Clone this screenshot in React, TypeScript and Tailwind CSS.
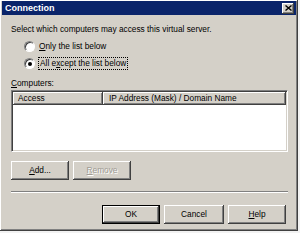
import React from "react";

// Classic Win2k-style "Connection" dialog
const FONT = { fontFamily: '"Liberation Sans", Arial, sans-serif' };

const raised =
  "shadow-[inset_-1px_-1px_#404040,inset_1px_1px_#ffffff,inset_-2px_-2px_#808080,inset_2px_2px_#d4d0c8]";

function Radio({ checked }: { checked?: boolean }) {
  return (
    <span className="relative flex h-[11px] w-[11px] shrink-0 items-center justify-center rounded-full border border-t-[#808080] border-l-[#808080] border-r-white border-b-white bg-white shadow-[inset_1px_1px_#404040]">
      {checked && <span className="h-[4px] w-[4px] rounded-full bg-black" />}
    </span>
  );
}

function Button({
  children,
  width,
  isDefault,
  disabled,
}: {
  children: React.ReactNode;
  width: string;
  isDefault?: boolean;
  disabled?: boolean;
}) {
  return (
    <div
      className={`flex h-[19px] items-center justify-center bg-[#d4d0c8] text-[8.3px] ${width} ${
        isDefault
          ? "border border-black shadow-[inset_-1px_-1px_#404040,inset_1px_1px_#ffffff,inset_-2px_-2px_#808080]"
          : raised
      } ${disabled ? "text-[#a09c94] [text-shadow:1px_1px_#ffffff]" : "text-black"}`}
    >
      {children}
    </div>
  );
}

export default function App() {
  return (
    <div className="h-[233px] w-[300px] bg-[#f2f2f2]" style={FONT}>
      <div className={`flex h-[231px] w-[298px] flex-col bg-[#d4d0c8] px-[2px] pt-[1px] ${raised}`}>
        {/* title bar */}
        <div className="flex h-[14px] items-center justify-between bg-[#0a246a] pl-[3px] pr-[2px]">
          <span className="text-[9px] font-bold leading-none text-white">Connection</span>
          <div className={`flex h-[11px] w-[12px] items-center justify-center bg-[#d4d0c8] ${raised}`}>
            <svg width="7" height="6" viewBox="0 0 7 6">
              <path d="M0.5 0.5 L6.5 5.5 M6.5 0.5 L0.5 5.5" stroke="#000" strokeWidth="1.4" />
            </svg>
          </div>
        </div>

        <div className="flex flex-col px-[9px] text-[8.3px] leading-[11px] text-black">
          <div className="mt-[9px]">Select which computers may access this virtual server.</div>

          <div className="mt-[5px] flex h-[13px] items-center gap-[3px] pl-[13px]">
            <Radio />
            <span className="px-[1px]">
              <span className="underline">O</span>nly the list below
            </span>
          </div>
          <div className="mt-[4px] flex h-[13px] items-center gap-[3px] pl-[13px]">
            <Radio checked />
            <span className="border border-dotted border-black px-[1px]">
              All e<span className="underline">x</span>cept the list below
            </span>
          </div>

          <div className="mt-[8px]">
            <span className="underline">C</span>omputers:
          </div>

          {/* list view */}
          <div className="mt-[1px] flex h-[62px] w-[277px] flex-col border border-t-[#808080] border-l-[#808080] border-r-white border-b-white bg-white shadow-[inset_1px_1px_#404040,inset_-1px_-1px_#d4d0c8]">
            <div className="mx-[1px] mt-[1px] flex h-[13px] text-[8.3px]">
              <div className={`flex w-[90px] items-center bg-[#d4d0c8] pl-[5px] ${raised}`}>Access</div>
              <div className={`flex flex-1 items-center bg-[#d4d0c8] pl-[6px] ${raised}`}>
                IP Address (Mask) / Domain Name
              </div>
            </div>
          </div>

          <div className="mt-[9px] flex gap-[4px]">
            <Button width="w-[58px]">
              <span>
                <span className="underline">A</span>dd...
              </span>
            </Button>
            <Button width="w-[58px]" disabled>
              <span>
                <span className="underline">R</span>emove
              </span>
            </Button>
          </div>

          <div className="mt-[11px] h-[2px] w-[277px] border-t border-t-[#808080] border-b border-b-white" />

          <div className="mt-[12px] flex justify-end gap-[4px] pr-[1px]">
            <Button width="w-[58px]" isDefault>
              OK
            </Button>
            <Button width="w-[60px]">Cancel</Button>
            <Button width="w-[58px]">
              <span>
                <span className="underline">H</span>elp
              </span>
            </Button>
          </div>
        </div>
      </div>
    </div>
  );
}
